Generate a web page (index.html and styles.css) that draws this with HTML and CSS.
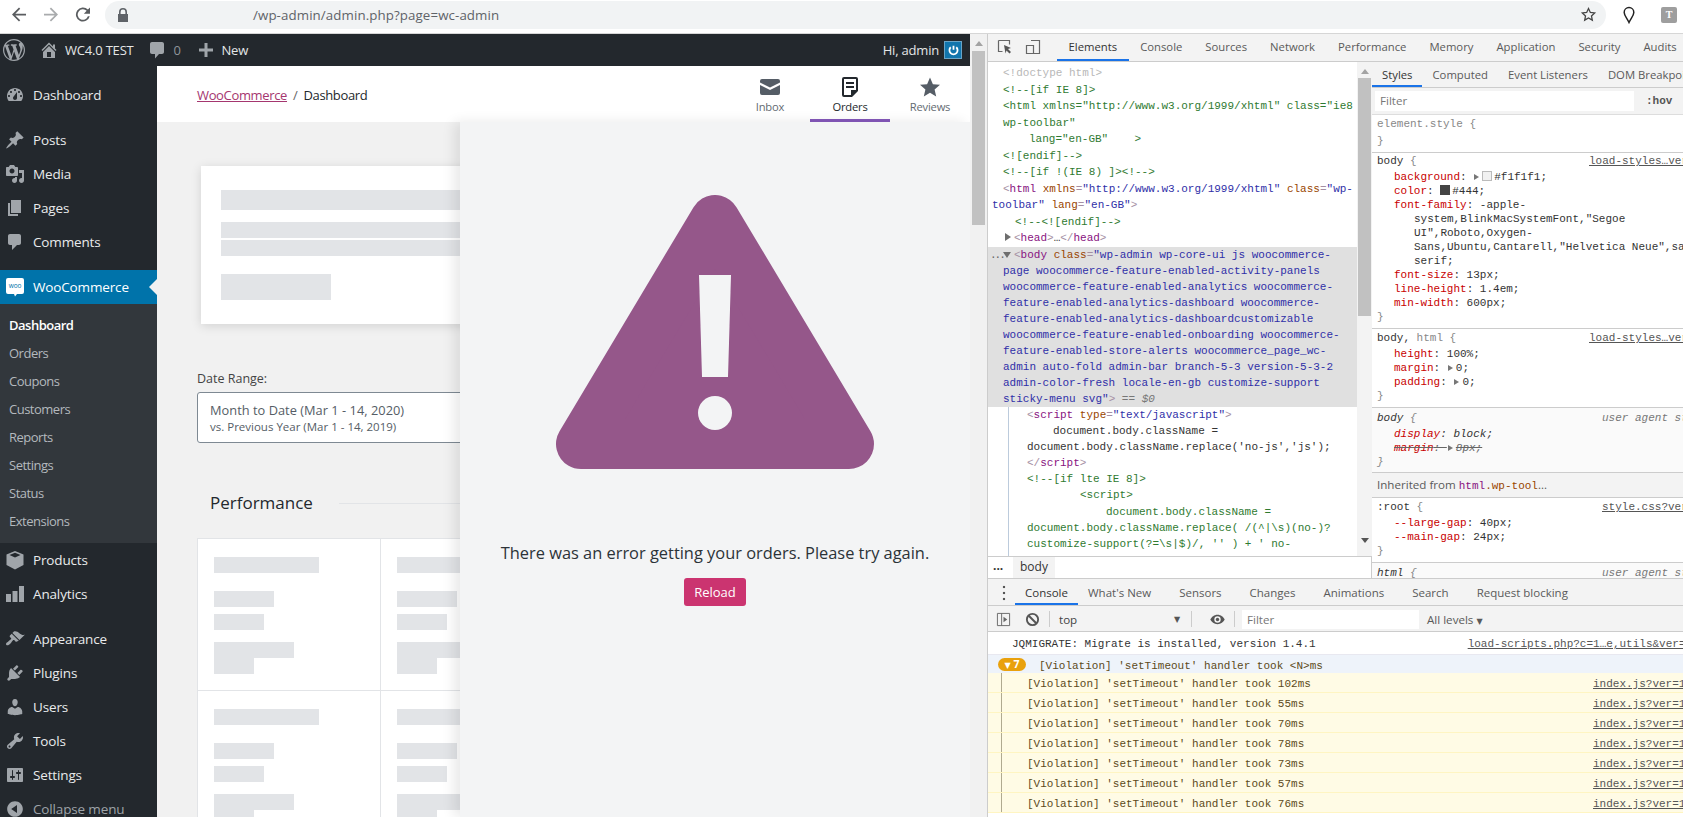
FILE: index.html
```html
<!DOCTYPE html>
<html lang="en">
<head>
<meta charset="utf-8">
<title>WooCommerce Dashboard</title>
<link rel="stylesheet" href="styles.css">
</head>
<body>
<header class="chrome">
  <svg class="nav-ico" viewBox="0 0 24 24"><path d="M20 11H7.8l5.6-5.6L12 4l-8 8 8 8 1.4-1.4L7.8 13H20z"/></svg>
  <svg class="nav-ico faint" viewBox="0 0 24 24"><path d="M4 11h12.2l-5.6-5.6L12 4l8 8-8 8-1.4-1.4 5.6-5.6H4z"/></svg>
  <svg class="nav-ico" viewBox="0 0 24 24"><path d="M17.6 6.4A8 8 0 1 0 19.7 14h-2.1a6 6 0 1 1-1.4-6.2L13 11h7V4z"/></svg>
  <div class="omnibox">
    <svg class="lock" viewBox="0 0 12 14"><path d="M2 6V4a4 4 0 0 1 8 0v2h1v8H1V6zm1.6 0h4.8V4a2.4 2.4 0 0 0-4.8 0z"/></svg>
    <span class="url">/wp-admin/admin.php?page=wc-admin</span>
    <svg class="star" viewBox="0 0 24 24"><path d="M12 3.5l2.6 5.6 6.1.7-4.5 4.2 1.2 6L12 17l-5.4 3 1.2-6-4.5-4.2 6.1-.7z" fill="none" stroke="#444" stroke-width="1.8"/></svg>
  </div>
  <svg class="ext-pin" viewBox="0 0 16 20"><path d="M8 18.5C6 14 2.5 10.5 2.5 7a5.500 5.500 0 0 1 11 0c0 3.500-3.500 7-5.500 11.500z" fill="none" stroke="#222" stroke-width="1.700"/></svg>
  <span class="profile">T</span>
</header>

<div class="main">
  <section class="wp">
    <div class="adminbar">
      <svg class="ab-wp" viewBox="0 0 20 20"><path d="M20 10c0-5.510-4.490-10-10-10C4.480 0 0 4.490 0 10c0 5.520 4.480 10 10 10 5.510 0 10-4.480 10-10zM7.780 15.370L4.370 6.220c.55-.02 1.170-.08 1.170-.08.5-.06.44-1.130-.06-1.110 0 0-1.450.11-2.370.11-.18 0-.37 0-.58-.01C4.120 2.690 6.870 1.110 10 1.110c2.330 0 4.450.87 6.050 2.340-.68-.11-1.650.39-1.650 1.580 0 .74.45 1.360.9 2.100.35.61.55 1.360.55 2.460 0 1.490-1.400 5-1.400 5l-3.030-8.370c.54-.02.82-.17.82-.17.5-.05.44-1.250-.06-1.220 0 0-1.440.12-2.380.12-.87 0-2.330-.12-2.330-.12-.5-.03-.56 1.200-.06 1.220l.92.08 1.260 3.410zM17.410 10c.24-.64.74-1.870.43-4.250.7 1.290 1.050 2.710 1.050 4.250 0 3.290-1.730 6.240-4.400 7.780.97-2.590 1.940-5.200 2.920-7.780zM6.100 18.090C3.120 16.650 1.110 13.530 1.110 10c0-1.300.23-2.480.72-3.590C3.250 10.300 4.670 14.200 6.100 18.090zm4.030-6.630l2.580 6.980c-.86.29-1.760.45-2.710.45-.79 0-1.570-.11-2.290-.33.81-2.380 1.620-4.740 2.420-7.100z"/></svg>
      <svg class="ab-ico ab-home" viewBox="0 0 20 20"><path d="M16 8.500l1.530 1.530-1.060 1.060L10 4.620l-6.470 6.470-1.060-1.060L10 2.500l4 4v-2h2v4zm-6-2.460l6 5.990V18H4v-5.970zM12 17v-5H8v5h4z"/></svg>
      <span class="ab-text ab-site">WC4.0 TEST</span>
      <svg class="ab-ico ab-bubble" viewBox="0 0 20 20"><path d="M5 2h10c1.100 0 2 .9 2 2v8c0 1.100-.9 2-2 2h-3l-4 4.500V14H5c-1.100 0-2-.9-2-2V4c0-1.100.9-2 2-2z"/></svg>
      <span class="ab-text ab-count">0</span>
      <svg class="ab-ico ab-plus" viewBox="0 0 20 20"><path d="M17 8.500v3h-5.500V17h-3v-5.500H3v-3h5.500V3h3v5.500z"/></svg>
      <span class="ab-text">New</span>
      <span class="ab-text ab-hi">Hi, admin</span>
      <span class="avatar"><svg viewBox="0 0 16 16"><path d="M8 2v5M4.600 4a5 5 0 1 0 6.800 0" fill="none" stroke="#fff" stroke-width="2.200"/></svg></span>
    </div>
    <div class="wp-body">
      <nav class="side">
        <a class="mi"><svg viewBox="0 0 20 20"><path d="M3.760 16h12.480c1.100-1.370 1.760-3.110 1.760-5 0-4.420-3.580-8-8-8s-8 3.580-8 8c0 1.890.66 3.630 1.760 5zM10 4c.55 0 1 .45 1 1s-.45 1-1 1-1-.45-1-1 .45-1 1-1zM6 6c.55 0 1 .45 1 1s-.45 1-1 1-1-.45-1-1 .45-1 1-1zm8 0c.55 0 1 .45 1 1s-.45 1-1 1-1-.45-1-1 .45-1 1-1zm-5.370 5.550L12 7v6c0 1.100-.9 2-2 2s-2-.9-2-2c0-.57.24-1.080.63-1.450zM4 10c.55 0 1 .45 1 1s-.45 1-1 1-1-.45-1-1 .45-1 1-1zm12 0c.55 0 1 .45 1 1s-.45 1-1 1-1-.45-1-1 .45-1 1-1z"/></svg>Dashboard</a>
        <a class="mi sep"><svg viewBox="0 0 20 20"><path d="M10.440 3.020l1.820-1.820 6.360 6.350-1.830 1.820c-1.050-.68-2.480-.57-3.410.36l-.75.75c-.92.93-1.040 2.350-.35 3.410l-1.830 1.820-2.410-2.410-2.800 2.790c-.42.42-3.380 2.710-3.800 2.290s1.860-3.390 2.280-3.810l2.790-2.790L4.100 9.360l1.830-1.820c1.050.69 2.480.57 3.400-.36l.75-.75c.93-.92 1.050-2.350.36-3.410z"/></svg>Posts</a>
        <a class="mi"><svg viewBox="0 0 20 20"><path d="M13 11V4c0-.55-.45-1-1-1h-1.670L9 1H5L3.670 3H2c-.55 0-1 .45-1 1v7c0 .55.45 1 1 1h10c.55 0 1-.45 1-1zM7 4.500c1.380 0 2.500 1.120 2.500 2.500S8.380 9.500 7 9.500 4.500 8.380 4.500 7 5.620 4.500 7 4.500zM14 6h5v10.500c0 1.380-1.120 2.500-2.500 2.500S14 17.880 14 16.500s1.120-2.500 2.500-2.500c.17 0 .34.02.5.05V9h-3V6zm-4 8.050V13h2v3.500c0 1.380-1.120 2.500-2.500 2.500S7 17.880 7 16.500 8.120 14 9.500 14c.17 0 .34.02.5.05z"/></svg>Media</a>
        <a class="mi"><svg viewBox="0 0 20 20"><path d="M6 15V2h10v13H6zm-1 1h8v2H3V5h2v11z"/></svg>Pages</a>
        <a class="mi"><svg viewBox="0 0 20 20"><path d="M5 2h9c1.100 0 2 .9 2 2v7c0 1.100-.9 2-2 2h-2l-5 5v-5H5c-1.100 0-2-.9-2-2V4c0-1.100.9-2 2-2z"/></svg>Comments</a>
        <a class="mi sep current"><svg class="woo" viewBox="0 0 20 20"><path d="M3 1h14a2 2 0 0 1 2 2v12a2 2 0 0 1-2 2h-5l-2 2.500L9 17H3a2 2 0 0 1-2-2V3a2 2 0 0 1 2-2z" fill="#fff"/><text x="10" y="11" text-anchor="middle" class="woo-text">woo</text></svg>WooCommerce</a>
        <div class="sub">
          <a class="si on">Dashboard</a>
          <a class="si">Orders</a>
          <a class="si">Coupons</a>
          <a class="si">Customers</a>
          <a class="si">Reports</a>
          <a class="si">Settings</a>
          <a class="si">Status</a>
          <a class="si">Extensions</a>
        </div>
        <a class="mi"><svg viewBox="0 0 20 20"><path d="M10 1l8.500 3.500v10.500L10 19.500 1.500 15V4.500zM10 2.800L4.500 5l5.500 2.400L15.500 5z"/></svg>Products</a>
        <a class="mi"><svg viewBox="0 0 20 20"><path d="M1 10h5v8H1zM7.500 7h5v11h-5zM14 2h5v16h-5z"/></svg>Analytics</a>
        <a class="mi sep"><svg viewBox="0 0 20 20"><path d="M14.480 11.060L7.410 3.990l1.500-1.500c.5-.56 2.300-.47 3.510.32 1.210.8 1.430 1.280 2.910 2.100 1.180.64 2.450 1.260 4.450.85zm-.71.71L6.700 4.700 4.930 6.470c-.39.39-.39 1.020 0 1.410l1.060 1.060c.39.39.39 1.030 0 1.420-.6.6-1.430 1.110-2.210 1.690-.35.26-.7.53-1.010.84C1.430 13.230.4 14.960 1.400 15.960c.99 1 2.730-.04 4.070-1.380.31-.31.58-.66.85-1.020.57-.78 1.080-1.610 1.690-2.210.39-.39 1.020-.39 1.410 0l1.060 1.060c.39.39 1.020.39 1.410 0z"/></svg>Appearance</a>
        <a class="mi"><svg viewBox="0 0 20 20"><path d="M13.110 4.360L9.870 7.600 8 5.730l3.240-3.240c.35-.34 1.050-.2 1.560.32.52.51.66 1.210.31 1.550zm-8 1.770l.91-1.120 9.010 9.010-1.190.84c-.71.71-2.630 1.160-3.820 1.160H6.140L4.900 17.260c-.59.59-1.540.59-2.120 0-.59-.58-.59-1.530 0-2.120l1.240-1.240v-3.880c0-1.130.4-3.190 1.090-3.890zm7.260 3.970l3.240-3.240c.34-.35 1.040-.21 1.550.31.52.51.66 1.210.31 1.550l-3.240 3.250z"/></svg>Plugins</a>
        <a class="mi"><svg viewBox="0 0 20 20"><path d="M10 9.250c-2.270 0-2.730-3.440-2.730-3.440C7 4.020 7.820 2 9.970 2c2.160 0 2.980 2.020 2.710 3.810 0 0-.41 3.440-2.680 3.440zm0 2.570L12.720 10c2.390 0 4.520 2.330 4.520 4.530v2.490s-3.650 1.130-7.240 1.130c-3.650 0-7.240-1.130-7.240-1.130v-2.490c0-2.250 1.940-4.480 4.470-4.480z"/></svg>Users</a>
        <a class="mi"><svg viewBox="0 0 20 20"><path d="M16.680 9.770c-1.340 1.340-3.300 1.670-4.950.99l-5.410 6.520c-.99.99-2.590.99-3.580 0s-.99-2.590 0-3.570l6.520-5.420c-.68-1.650-.35-3.610.99-4.950 1.280-1.280 3.120-1.620 4.720-1.060l-2.890 2.890 2.820 2.820 2.860-2.870c.53 1.580.18 3.390-1.080 4.650zM3.810 16.210c.4.39 1.040.39 1.430 0 .4-.4.4-1.040 0-1.430-.39-.4-1.030-.4-1.430 0-.39.39-.39 1.030 0 1.430z"/></svg>Tools</a>
        <a class="mi"><svg viewBox="0 0 20 20"><path d="M18 16V4c0-.55-.45-1-1-1H3c-.55 0-1 .45-1 1v12c0 .55.45 1 1 1h14c.55 0 1-.45 1-1zM8 11h1c.55 0 1 .45 1 1s-.45 1-1 1H8v1.500c0 .28-.22.5-.5.5s-.5-.22-.5-.5V13H6c-.55 0-1-.45-1-1s.45-1 1-1h1V5.500c0-.28.22-.5.5-.5s.5.22.5.5V11zm5-2h-1c-.55 0-1-.45-1-1s.45-1 1-1h1V5.500c0-.28.22-.5.5-.5s.5.22.5.5V7h1c.55 0 1 .45 1 1s-.45 1-1 1h-1v5.500c0 .28-.22.5-.5.5s-.5-.22-.5-.5V9z"/></svg>Settings</a>
        <a class="mi collapse"><svg viewBox="0 0 20 20"><path d="M10 2.160c4.330 0 7.840 3.510 7.840 7.840s-3.510 7.840-7.840 7.840S2.160 14.330 2.160 10 5.710 2.160 10 2.160zm2 11.720V6.120L6.180 9.970z"/></svg>Collapse menu</a>
      </nav>
      <main class="content">
        <div class="wc-head">
          <div class="crumbs"><a class="crumb-link">WooCommerce</a><span class="crumb-sep">/</span><span>Dashboard</span></div>
          <div class="activity">
            <div class="act"><svg class="act-ico" viewBox="0 0 20 16"><path d="M2 0h16a2 2 0 0 1 2 2v1.500l-10 5-10-5V2a2 2 0 0 1 2-2zM0 6l10 5 10-5v8a2 2 0 0 1-2 2H2a2 2 0 0 1-2-2z"/></svg><span>Inbox</span></div>
            <div class="act act-on"><svg class="act-ico" viewBox="0 0 16 20"><path d="M2 0h12a2 2 0 0 1 2 2v12l-6 6H2a2 2 0 0 1-2-2V2a2 2 0 0 1 2-2zm0 2v16h7v-5h5V2zm2 3h8v2H4zm0 4h8v2H4z"/></svg><span>Orders</span></div>
            <div class="act"><svg class="act-ico" viewBox="0 0 20 19"><path d="M10 0l2.900 6.700 7.100.6-5.400 4.700 1.600 7L10 15.300 3.800 19l1.600-7L0 7.300l7.100-.6z"/></svg><span>Reviews</span></div>
          </div>
        </div>
        <div class="page">
          <div class="card">
            <div class="ph ph-a"></div>
            <div class="ph ph-b"></div>
            <div class="ph ph-c"></div>
            <div class="ph ph-d"></div>
          </div>
          <label class="date-label">Date Range:</label>
          <div class="date-box">
            <div class="date-main">Month to Date (Mar 1 - 14, 2020)</div>
            <div class="date-sub">vs. Previous Year (Mar 1 - 14, 2019)</div>
          </div>
          <div class="perf-head"><h2>Performance</h2><span class="perf-line"></span></div>
          <div class="perf-grid">
            <div class="cell"><i class="b b1"></i><i class="b b2"></i><i class="b b3"></i><i class="b b4"></i><i class="b b5"></i></div>
            <div class="cell"><i class="b b1"></i><i class="b b2"></i><i class="b b3"></i><i class="b b4"></i><i class="b b5"></i></div>
            <div class="cell"><i class="b b1"></i><i class="b b2"></i><i class="b b3"></i><i class="b b4"></i><i class="b b5"></i></div>
            <div class="cell"><i class="b b1"></i><i class="b b2"></i><i class="b b3"></i><i class="b b4"></i><i class="b b5"></i></div>
          </div>
        </div>
        <aside class="panel">
          <svg class="warn" viewBox="0 0 320 275">
            <path class="warn-tri" d="M159 25L25 249H293Z"/>
            <path class="warn-mark" d="M143 80h32l-3 102h-26z"/>
            <circle class="warn-mark" cx="159" cy="218" r="17"/>
          </svg>
          <p class="err">There was an error getting your orders. Please try again.</p>
          <button class="reload">Reload</button>
        </aside>
      </main>
    </div>
  </section>

  <div class="page-scroll"><span class="arrow-up"></span><span class="page-thumb"></span></div>

  <section class="dev">
    <div class="dev-tabs">
      <svg class="d-ico d-inspect" viewBox="0 0 16 16"><path d="M1.500 1.500h11v4M5.500 12.500h-4v-11" fill="none" stroke="#666" stroke-width="1.200"/><path d="M7 6l7 3-3 1 3 3-1.500 1.500-3-3-1 3z" fill="#555"/></svg>
      <svg class="d-ico d-device" viewBox="0 0 16 16"><path d="M6 1.500h8.500v13H9M1.500 6.500H8.500v8H1.500z" fill="none" stroke="#666" stroke-width="1.200"/></svg>
      <span class="d-sep"></span>
      <span class="tab tab-on">Elements</span><span class="tab">Console</span><span class="tab">Sources</span><span class="tab">Network</span><span class="tab">Performance</span><span class="tab">Memory</span><span class="tab">Application</span><span class="tab">Security</span><span class="tab">Audits</span>
    </div>
    <div class="upper">
      <div class="elements">
        <div class="tree-row">
          <div class="tree">
            <div class="ln i15 top doc">&lt;!doctype html&gt;</div>
            <div class="ln i15 top cm">&lt;!--[if IE 8]&gt;</div>
            <div class="ln i15 top cm">&lt;html xmlns="http://www.w3.org/1999/xhtml" class="ie8</div>
            <div class="ln i15 top cm">wp-toolbar"</div>
            <div class="ln i41 top cm">lang="en-GB"&nbsp;&nbsp;&nbsp;&nbsp;&gt;</div>
            <div class="ln i15 top cm">&lt;![endif]--&gt;</div>
            <div class="ln i15 top cm">&lt;!--[if !(IE 8) ]&gt;&lt;!--&gt;</div>
            <div class="ln i15 top"><span class="br">&lt;</span><span class="tg">html</span> <span class="an">xmlns</span><span class="br">=</span><span class="av">"http://www.w3.org/1999/xhtml"</span> <span class="an">class</span><span class="br">=</span><span class="av">"wp-</span></div>
            <div class="ln i4 top"><span class="av">toolbar"</span> <span class="an">lang</span><span class="br">=</span><span class="av">"en-GB"</span><span class="br">&gt;</span></div>
            <div class="ln i27 top cm">&lt;!--&lt;![endif]--&gt;</div>
            <div class="ln i26 top"><span class="tri-r"></span><span class="br">&lt;</span><span class="tg">head</span><span class="br">&gt;</span>…<span class="br">&lt;/</span><span class="tg">head</span><span class="br">&gt;</span></div>
            <div class="hl">
              <div class="ln i26"><span class="dots">...</span><span class="tri-d"></span><span class="br">&lt;</span><span class="tg">body</span> <span class="an">class</span><span class="br">=</span><span class="av">"wp-admin wp-core-ui js woocommerce-</span></div>
              <div class="ln i15 av">page woocommerce-feature-enabled-activity-panels</div>
              <div class="ln i15 av">woocommerce-feature-enabled-analytics woocommerce-</div>
              <div class="ln i15 av">feature-enabled-analytics-dashboard woocommerce-</div>
              <div class="ln i15 av">feature-enabled-analytics-dashboardcustomizable</div>
              <div class="ln i15 av">woocommerce-feature-enabled-onboarding woocommerce-</div>
              <div class="ln i15 av">feature-enabled-store-alerts woocommerce_page_wc-</div>
              <div class="ln i15 av">admin auto-fold admin-bar branch-5-3 version-5-3-2</div>
              <div class="ln i15 av">admin-color-fresh locale-en-gb customize-support</div>
              <div class="ln i15"><span class="av">sticky-menu svg"</span><span class="br">&gt;</span> <em class="eq">== $0</em></div>
            </div>
            <div class="kids">
              <div class="ln j39"><span class="br">&lt;</span><span class="tg">script</span> <span class="an">type</span><span class="br">=</span><span class="av">"text/javascript"</span><span class="br">&gt;</span></div>
              <div class="ln j65">document.body.className =</div>
              <div class="ln j39">document.body.className.replace('no-js','js');</div>
              <div class="ln j39"><span class="br">&lt;/</span><span class="tg">script</span><span class="br">&gt;</span></div>
              <div class="ln j39 cm">&lt;!--[if lte IE 8]&gt;</div>
              <div class="ln j92 cm">&lt;script&gt;</div>
              <div class="ln j118 cm">document.body.className =</div>
              <div class="ln j39 cm">document.body.className.replace( /(^|\s)(no-)?</div>
              <div class="ln j39 cm">customize-support(?=\s|$)/, '' ) + ' no-</div>
            </div>
          </div>
          <div class="v-scroll"><span class="arrow-up"></span><span class="v-thumb"></span><span class="arrow-down"></span></div>
        </div>
        <div class="crumbbar"><span class="crumb-more">...</span><span class="crumb-body">body</span></div>
      </div>
      <div class="styles">
        <div class="st-tabs"><span class="st-tab st-on">Styles</span><span class="st-tab">Computed</span><span class="st-tab">Event Listeners</span><span class="st-tab">DOM Breakpoints</span></div>
        <div class="st-filter"><span class="st-input">Filter</span><span class="hov">:hov</span></div>
        <div class="rule rule-el"><div class="sel"><span class="s-m">element.style {</span></div><div class="p"><span class="s-m">}</span></div></div>
        <div class="rule">
          <div class="sel"><span>body <span class="s-m">{</span></span><a class="src">load-styles…ver</a></div>
          <div class="p pi"><span class="k">background</span>: <span class="mini-t"></span><span class="sw sw-l"></span>#f1f1f1;</div>
          <div class="p pi"><span class="k">color</span>: <span class="sw sw-d"></span>#444;</div>
          <div class="p pi"><span class="k">font-family</span>: -apple-</div>
          <div class="p pj">system,BlinkMacSystemFont,"Segoe</div>
          <div class="p pj">UI",Roboto,Oxygen-</div>
          <div class="p pj">Sans,Ubuntu,Cantarell,"Helvetica Neue",sans-</div>
          <div class="p pj">serif;</div>
          <div class="p pi"><span class="k">font-size</span>: 13px;</div>
          <div class="p pi"><span class="k">line-height</span>: 1.4em;</div>
          <div class="p pi"><span class="k">min-width</span>: 600px;</div>
          <div class="p"><span class="s-m">}</span></div>
        </div>
        <div class="rule rule-t1">
          <div class="sel"><span>body, <span class="s-m">html {</span></span><a class="src">load-styles…ver</a></div>
          <div class="p pi"><span class="k">height</span>: 100%;</div>
          <div class="p pi"><span class="k">margin</span>: <span class="mini-t"></span>0;</div>
          <div class="p pi"><span class="k">padding</span>: <span class="mini-t"></span>0;</div>
          <div class="p"><span class="s-m">}</span></div>
        </div>
        <div class="rule rule-ua">
          <div class="sel"><span>body <span class="s-m">{</span></span><span class="ua">user agent stylesheet</span></div>
          <div class="p pi"><span class="k">display</span>: block;</div>
          <div class="p pi strike"><span class="k">margin</span>: <span class="mini-t"></span>8px;</div>
          <div class="p"><span class="s-m">}</span></div>
        </div>
        <div class="inherit">Inherited from <span class="in-code"><span class="tg">html</span><span class="an">.wp-tool</span></span>…</div>
        <div class="rule rule-t1">
          <div class="sel"><span>:root <span class="s-m">{</span></span><a class="src src2">style.css?ver</a></div>
          <div class="p pi"><span class="k">--large-gap</span>: 40px;</div>
          <div class="p pi"><span class="k">--main-gap</span>: 24px;</div>
          <div class="p"><span class="s-m">}</span></div>
        </div>
        <div class="rule rule-ua"><div class="sel"><span>html <span class="s-m">{</span></span><span class="ua">user agent stylesheet</span></div></div>
      </div>
    </div>
    <div class="drawer">
      <div class="dr-tabs"><span class="dr-dots"></span><span class="dtab dtab-on">Console</span><span class="dtab">What's New</span><span class="dtab">Sensors</span><span class="dtab">Changes</span><span class="dtab">Animations</span><span class="dtab">Search</span><span class="dtab">Request blocking</span></div>
      <div class="dr-bar">
        <svg class="cb-ico cb-side" viewBox="0 0 16 16"><path d="M1.500 1.500h13v13h-13zM6 1.500v13" fill="none" stroke="#666"/><path d="M8 5l4 3-4 3z" fill="#666"/></svg>
        <svg class="cb-ico cb-block" viewBox="0 0 16 16"><circle cx="8" cy="8" r="6" fill="none" stroke="#555" stroke-width="2"/><path d="M4 4l8 8" stroke="#555" stroke-width="2"/></svg>
        <span class="cb-sep"></span>
        <span class="cb-top">top</span><span class="cb-caret">▼</span>
        <span class="cb-sep"></span>
        <svg class="cb-ico cb-eye" viewBox="0 0 16 16"><path d="M8 3c3.500 0 6.500 2.300 7.500 5-1 2.700-4 5-7.500 5S1.500 10.700.5 8c1-2.700 4-5 7.500-5z" fill="#555"/><circle cx="8" cy="8" r="3.400" fill="#f3f3f3"/><circle cx="8" cy="8" r="1.800" fill="#555"/></svg>
        <span class="cb-sep"></span>
        <span class="cb-filter">Filter</span>
        <span class="cb-levels">All levels <i class="lv">▼</i></span>
      </div>
      <div class="log">
        <div class="row-jq"><span>JQMIGRATE: Migrate is installed, version 1.4.1</span><a class="src3">load-scripts.php?c=1…e,utils&amp;ver=</a></div>
        <div class="row-group"><span class="badge"><i class="lv">▼</i> 7</span><span class="group-text">[Violation] 'setTimeout' handler took &lt;N&gt;ms</span></div>
        <div class="row-v"><span class="guide"></span><span>[Violation] 'setTimeout' handler took 102ms</span><a class="src4">index.js?ver=1</a></div>
        <div class="row-v"><span class="guide"></span><span>[Violation] 'setTimeout' handler took 55ms</span><a class="src4">index.js?ver=1</a></div>
        <div class="row-v"><span class="guide"></span><span>[Violation] 'setTimeout' handler took 70ms</span><a class="src4">index.js?ver=1</a></div>
        <div class="row-v"><span class="guide"></span><span>[Violation] 'setTimeout' handler took 78ms</span><a class="src4">index.js?ver=1</a></div>
        <div class="row-v"><span class="guide"></span><span>[Violation] 'setTimeout' handler took 73ms</span><a class="src4">index.js?ver=1</a></div>
        <div class="row-v"><span class="guide"></span><span>[Violation] 'setTimeout' handler took 57ms</span><a class="src4">index.js?ver=1</a></div>
        <div class="row-v"><span class="guide"></span><span>[Violation] 'setTimeout' handler took 76ms</span><a class="src4">index.js?ver=1</a></div>
      </div>
    </div>
  </section>
</div>
</body>
</html>
```
FILE: styles.css
```css
* { box-sizing: border-box; }
html, body { margin: 0; height: 817px; overflow: hidden; background: #fff; }
body { font-family: "Open Sans", "Noto Sans", sans-serif; font-size: 13px; color: #333; display: flex; flex-direction: column; }

/* browser chrome */
.chrome { height: 34px; flex: none; display: flex; align-items: center; padding: 0 0 4px 3px; border-bottom: 1px solid #d6d6d6; background: #fff; }
.nav-ico { width: 32px; height: 21px; fill: #5a5d60; flex: none; }
.nav-ico.faint { fill: #a9abad; }
.omnibox { margin-left: 6px; width: 1501px; height: 28px; border-radius: 14px; background: #f1f3f4; display: flex; align-items: center; padding: 0 12px; }
.lock { width: 12px; height: 14px; fill: #5f6368; flex: none; }
.url { margin-left: 124px; font-size: 13.300px; color: #5f6368; letter-spacing: .1px; white-space: nowrap; flex: 1; }
.star { width: 17px; height: 17px; flex: none; margin-right: -3px; }
.ext-pin { width: 14px; height: 18px; margin-left: 16px; flex: none; }
.profile { width: 16px; height: 16px; margin-left: 25px; background: #9e9e9e; color: #fff; border-radius: 2px; font: bold 10px/16px "Liberation Serif", serif; text-align: center; flex: none; }

.main { flex: 1; display: flex; min-height: 0; }

/* wordpress */
.wp { width: 970px; flex: none; display: flex; flex-direction: column; min-height: 0; }
.adminbar { height: 32px; flex: none; background: #23282d; display: flex; align-items: center; color: #e4e6e7; }
.ab-wp { width: 22px; height: 22px; fill: #a0a5aa; margin-left: 3px; flex: none; }
.ab-ico { width: 20px; height: 20px; fill: #a0a5aa; flex: none; }
.ab-home { margin-left: 14px; }
.ab-text { font-size: 13px; white-space: nowrap; letter-spacing: -.2px; }
.ab-site { margin-left: 6px; }
.ab-bubble { margin-left: 13px; }
.ab-count { margin-left: 7px; color: #8f959a; width: 11px; }
.ab-plus { margin-left: 11px; margin-right: 6px; }
.ab-hi { margin-left: auto; }
.avatar { width: 18px; height: 18px; margin: 0 8px 0 5px; background: #1175ad; border: 1px solid #6aa4c6; display: flex; align-items: center; justify-content: center; }
.avatar svg { width: 13px; height: 13px; }

.wp-body { flex: 1; display: flex; min-height: 0; }
.side { width: 157px; flex: none; background: #23282d; padding-top: 12px; overflow: hidden; }
.mi { display: flex; align-items: center; height: 34px; color: #e9ebec; font-size: 13.500px; letter-spacing: -.15px; position: relative; white-space: nowrap; }
.mi svg { width: 20px; height: 20px; margin: 0 8px 0 5px; fill: #a0a5aa; flex: none; }
.sep { margin-top: 11px; }
.current { background: #0073aa; color: #fff; }
.current::after { content: ""; position: absolute; right: 0; top: 9px; border: 8px solid transparent; border-right-color: #f1f1f1; border-left-width: 0; }
.woo-text { font: 6.500px "Open Sans", sans-serif; fill: #0073aa; }
.sub { background: #32373c; padding: 7px 0 8px; }
.si { display: block; height: 28px; line-height: 28px; padding-left: 9px; color: #b4b9be; font-size: 13px; letter-spacing: -.5px; }
.si.on { color: #fff; font-weight: 600; }
.collapse { color: #9ea3a8; }

.content { flex: 1; position: relative; min-width: 0; background: #f1f1f1; overflow: hidden; }
.wc-head { height: 56px; background: #fff; display: flex; align-items: center; justify-content: space-between; padding-left: 40px; }
.crumbs { font-size: 13px; color: #23282d; letter-spacing: -.35px; padding-top: 1px; }
.crumb-link { color: #a5366f; text-decoration: underline; }
.crumb-sep { margin: 0 6px; color: #666; }
.activity { display: flex; align-self: stretch; position: relative; z-index: 2; }
.act { width: 80px; display: flex; flex-direction: column; align-items: center; color: #646b72; font-size: 11.200px; padding-top: 11px; letter-spacing: -.2px; border-bottom: 3px solid transparent; }
.act span { margin-top: 2px; line-height: 16px; }
.act-ico { width: 20px; height: 20px; fill: #555d66; }
.act-on { color: #23282d; border-bottom-color: #7f54b3; }
.act-on .act-ico { fill: #23282d; }

.page { padding: 44px 0 0 40px; }
.card { width: 730px; height: 158px; margin-left: 4px; background: #fff; box-shadow: 0 2px 10px rgba(0,0,0,.13); padding: 24px 0 0 20px; }
.ph { background: #e2e4e7; }
.ph-a { width: 500px; height: 20px; }
.ph-b { width: 500px; height: 16px; margin-top: 12px; }
.ph-c { width: 500px; height: 16px; margin-top: 2px; }
.ph-d { width: 110px; height: 26px; margin-top: 18px; }
.date-label { display: block; margin-top: 46px; line-height: 18px; font-size: 12.500px; color: #444; }
.date-box { width: 700px; height: 51px; margin-top: 4px; background: #fff; border: 1px solid #7e8993; border-radius: 3px; padding: 8px 0 0 12px; color: #555d66; }
.date-main { font-size: 12.800px; font-weight: 500; line-height: 18px; letter-spacing: .03px; }
.date-sub { font-size: 11.500px; line-height: 16px; }
.perf-head { display: flex; align-items: center; margin: 47px 0 0 13px; height: 26px; }
.perf-head h2 { margin: 0; font-size: 17px; font-weight: 500; color: #23282d; line-height: 26px; }
.perf-line { width: 500px; height: 1px; background: #e2e4e7; margin-left: 26px; }
.perf-grid { display: grid; grid-template-columns: repeat(2, 183px) ; width: 730px; margin-top: 22px; background: #fff; border: 1px solid #e2e4e7; border-width: 1px 0 0 1px; }
.cell { height: 152px; border-right: 1px solid #e2e4e7; border-bottom: 1px solid #e2e4e7; padding: 18px 0 0 16px; background: #fff; }
.b { display: block; background: #e2e4e7; height: 16px; }
.b1 { width: 105px; }
.b2 { width: 60px; margin-top: 18px; }
.b3 { width: 50px; margin-top: 7px; }
.b4 { width: 80px; margin-top: 12px; }
.b5 { width: 40px; }

.panel { position: absolute; left: 303px; right: 0; top: 56px; bottom: 0; background: #f3f4f5; box-shadow: -6px 0 12px rgba(0,0,0,.09); display: flex; flex-direction: column; align-items: center; padding-top: 73px; }
.warn { width: 320px; height: 275px; flex: none; margin-left: 1px; }
.warn-tri { fill: #95578a; stroke: #95578a; stroke-width: 50; stroke-linejoin: round; }
.warn-mark { fill: #f3f4f5; }
.err { margin: 71px 0 0; font-size: 16.400px; line-height: 24px; color: #2c3338; white-space: nowrap; }
.reload { margin-top: 13px; width: 62px; height: 28px; background: #cb3470; border: 0; border-radius: 3px; color: #fff; font: 13px "Open Sans", sans-serif; padding: 0; }

.page-scroll { width: 17px; flex: none; background: #f1f1f1; padding: 0 2px; display: flex; flex-direction: column; align-items: center; }
.arrow-up { flex: none; width: 0; height: 0; margin-top: 7px; border: 4px solid transparent; border-top: 0; border-bottom: 5px solid #a3a3a3; }
.arrow-down { flex: none; width: 0; height: 0; margin-top: 6px; border: 4px solid transparent; border-bottom: 0; border-top: 5px solid #555; }
.page-thumb { width: 13px; height: 174px; margin-top: 5px; background: #c1c1c1; }

/* devtools */
.dev { flex: 1; min-width: 0; display: flex; flex-direction: column; border-left: 1px solid #ccc; margin-left: 0; font-size: 11.600px; color: #5a5a5a; overflow: hidden; }
.dev-tabs { height: 28px; flex: none; display: flex; align-items: center; background: #f3f3f3; border-bottom: 1px solid #ccc; padding-bottom: 1px; font-size: 11.300px; }
.d-ico { width: 16px; height: 16px; flex: none; }
.d-inspect { margin-left: 9px; }
.d-device { margin-left: 12px; }
.d-sep { width: 1px; height: 16px; background: #ccc; margin: 0 5px 0 11px; }
.tab { height: 27px; line-height: 26px; padding: 0 11.500px; white-space: nowrap; flex: none; }
.tab-on { color: #333; box-shadow: inset 0 -2px 0 #1a73e8; }

.upper { height: 517px; flex: none; display: flex; border-bottom: 1px solid #ccc; min-height: 0; }
.elements { width: 384px; flex: none; display: flex; flex-direction: column; border-right: 1px solid #ccc; }
.tree-row { height: 495px; flex: none; display: flex; border-bottom: 1px solid #ccc; }
.tree { width: 369px; flex: none; padding-top: 3px; font: 11px/16px "Liberation Mono", monospace; overflow: hidden; color: #333; }
.ln { white-space: pre; height: 16px; line-height: 16px; position: relative; }
.top { height: 16.500px; }
.i4 { padding-left: 4px; }
.i15 { padding-left: 15px; }
.i26 { padding-left: 26px; }
.i27 { padding-left: 27px; }
.i41 { padding-left: 41px; }
.j39 { padding-left: 39px; }
.j65 { padding-left: 65px; }
.j92 { padding-left: 92px; }
.j118 { padding-left: 118px; }
.doc { color: #b8b8b8; }
.cm { color: #2f7a31; }
.br { color: #a58fa3; }
.tg { color: #881280; }
.an { color: #994500; }
.av { color: #2f2fa8; }
.eq { color: #777; }
.hl { background: #e0e0e0; height: 160px; }
.kids { position: relative; height: 150px; margin-top: 0; overflow: hidden; }
.kids .ln { height: 16.200px; }
.kids::before { content: ""; position: absolute; left: 20px; top: 0; bottom: 0; width: 1px; background: #bccbdc; }
.tri-r { position: absolute; left: 17px; top: 3px; border: 4px solid transparent; border-left: 6px solid #6e6e6e; border-right: 0; }
.tri-d { position: absolute; left: 15px; top: 5px; border: 4px solid transparent; border-top: 6px solid #6e6e6e; border-bottom: 0; }
.dots { position: absolute; left: 2px; top: 0; color: #666; letter-spacing: -2px; }
.v-scroll { width: 15px; flex: none; background: #f3f3f3; display: flex; flex-direction: column; align-items: center; }
.v-thumb { width: 13px; height: 238px; margin-top: 4px; background: #c1c1c1; }
.v-scroll .arrow-down { margin-top: 222px; }
.crumbbar { height: 21px; flex: none; display: flex; align-items: stretch; font-size: 12px; color: #333; padding-left: 5px; }
.crumb-more { width: 20px; font-weight: 700; line-height: 18px; }
.crumb-body { background: #f3f3f3; padding: 0 7px; line-height: 20px; }

.styles { flex: 1; min-width: 0; overflow: hidden; font: 11px/14px "Liberation Mono", monospace; color: #333; }
.st-tabs { height: 26px; display: flex; font: 11.300px/25px "Open Sans", sans-serif; background: #f3f3f3; border-bottom: 1px solid #ccc; color: #5a5a5a; white-space: nowrap; }
.st-tab { padding: 0 10px; flex: none; }
.st-on { color: #333; box-shadow: inset 0 -2px 0 #1a73e8; }
.st-filter { height: 27px; display: flex; align-items: center; padding: 0 3px; background: #f3f3f3; border-bottom: 1px solid #ddd; }
.st-input { width: 259px; height: 20px; background: #fff; font: 11.600px/20px "Open Sans", sans-serif; color: #777; padding-left: 5px; flex: none; }
.hov { margin-left: 12px; font-weight: 700; color: #555; }
.rule { padding: 0 0 4px 5px; border-bottom: 1px solid #ccc; }
.rule-el { padding-top: 1px; }
.rule-el .sel { margin-bottom: 2px; }
.rule-t1 { padding-top: 1px; }
.rule-ua { padding: 2px 0 3px 5px; background: #fafafa; font-style: italic; }
.sel { height: 16px; line-height: 17px; display: flex; justify-content: space-between; margin-bottom: 1px; white-space: nowrap; }
.s-m { color: #888; }
.src { width: 94px; flex: none; overflow: hidden; color: #555; text-decoration: underline; }
.src2 { width: 81px; }
.ua { width: 81px; flex: none; overflow: hidden; color: #777; }
.p { height: 14px; line-height: 15px; white-space: pre; }
.pi { padding-left: 17px; }
.pj { padding-left: 37px; }
.k { color: #c80000; }
.strike { text-decoration: line-through; color: #666; }
.mini-t { display: inline-block; margin: 0 3px 0 1px; border: 3.500px solid transparent; border-left: 5px solid #777; border-right: 0; }
.sw { display: inline-block; width: 10px; height: 10px; margin: 0 2px -1px 0; border: 1px solid #bbb; }
.sw-l { background: #f1f1f1; }
.sw-d { background: #444; border-color: #444; }
.inherit { height: 25px; background: #f3f3f3; border-bottom: 1px solid #ccc; padding-left: 5px; font: 11.600px/24px "Open Sans", sans-serif; color: #5a5a5a; white-space: nowrap; }
.in-code { font: 11px "Liberation Mono", monospace; }

.drawer { flex: 1; min-height: 0; display: flex; flex-direction: column; }
.dr-tabs { height: 27px; flex: none; display: flex; background: #f3f3f3; border-bottom: 1px solid #ccc; font-size: 11.500px; white-space: nowrap; position: relative; }
.dr-dots { width: 27px; flex: none; background: radial-gradient(circle, #555 1.300px, transparent 1.600px) 14px 5px / 4px 6px repeat-y; background-clip: content-box; padding: 5px 0 4px; }
.dtab { height: 26px; line-height: 27px; padding: 0 10px; margin-right: 8px; flex: none; }
.dtab-on { color: #333; box-shadow: inset 0 -2px 0 #1a73e8; margin-right: 0; }
.dr-bar { height: 26px; flex: none; display: flex; align-items: center; background: #f3f3f3; border-bottom: 1px solid #ccc; padding-top: 1px; }
.cb-ico { width: 15px; height: 15px; flex: none; }
.cb-side { margin-left: 8px; }
.cb-block { margin-left: 14px; }
.cb-sep { width: 1px; height: 16px; background: #ccc; flex: none; margin: 0 9px; }
.cb-top { width: 120px; flex: none; color: #444; margin-left: 0; font-size: 11.600px; }
.cb-caret { font: 8px "DejaVu Sans", sans-serif; color: #555; margin-left: -5px; width: 8px; }
.cb-eye { margin-left: 9px; }
.cb-filter { width: 177px; height: 19px; margin-left: -2px; background: #fff; padding-left: 5px; color: #777; line-height: 19px; flex: none; }
.cb-levels { margin-left: 8px; white-space: nowrap; }
.lv { font: normal 8px "DejaVu Sans", sans-serif; }
.log { flex: 1; min-height: 0; font: 11px "Liberation Mono", monospace; white-space: nowrap; overflow: hidden; }
.row-jq { height: 23px; padding-left: 24px; border-bottom: 1px solid #e8e8f0; line-height: 25px; color: #333; display: flex; }
.src3 { margin-left: 152px; text-decoration: underline; color: #555; }
.row-group { height: 18px; background: #eef3fa; display: flex; align-items: center; padding-left: 10px; color: #5c4a20; }
.group-text { padding-top: 3px; }
.badge { width: 28px; height: 13px; margin-right: 13px; border-radius: 7px; background: #e9a10d; color: #fff; font: 700 10.500px/13px "Open Sans", sans-serif; text-align: center; flex: none; }
.row-v { height: 20px; background: #fffbe5; border-bottom: 1px solid #fff5c2; padding-left: 13px; display: flex; align-items: stretch; line-height: 22px; color: #5c4a20; }
.guide { width: 26px; flex: none; border-left: 1px solid #b0aa90; }
.src4 { margin-left: auto; width: 90px; flex: none; overflow: hidden; text-decoration: underline; color: #555; }
```
